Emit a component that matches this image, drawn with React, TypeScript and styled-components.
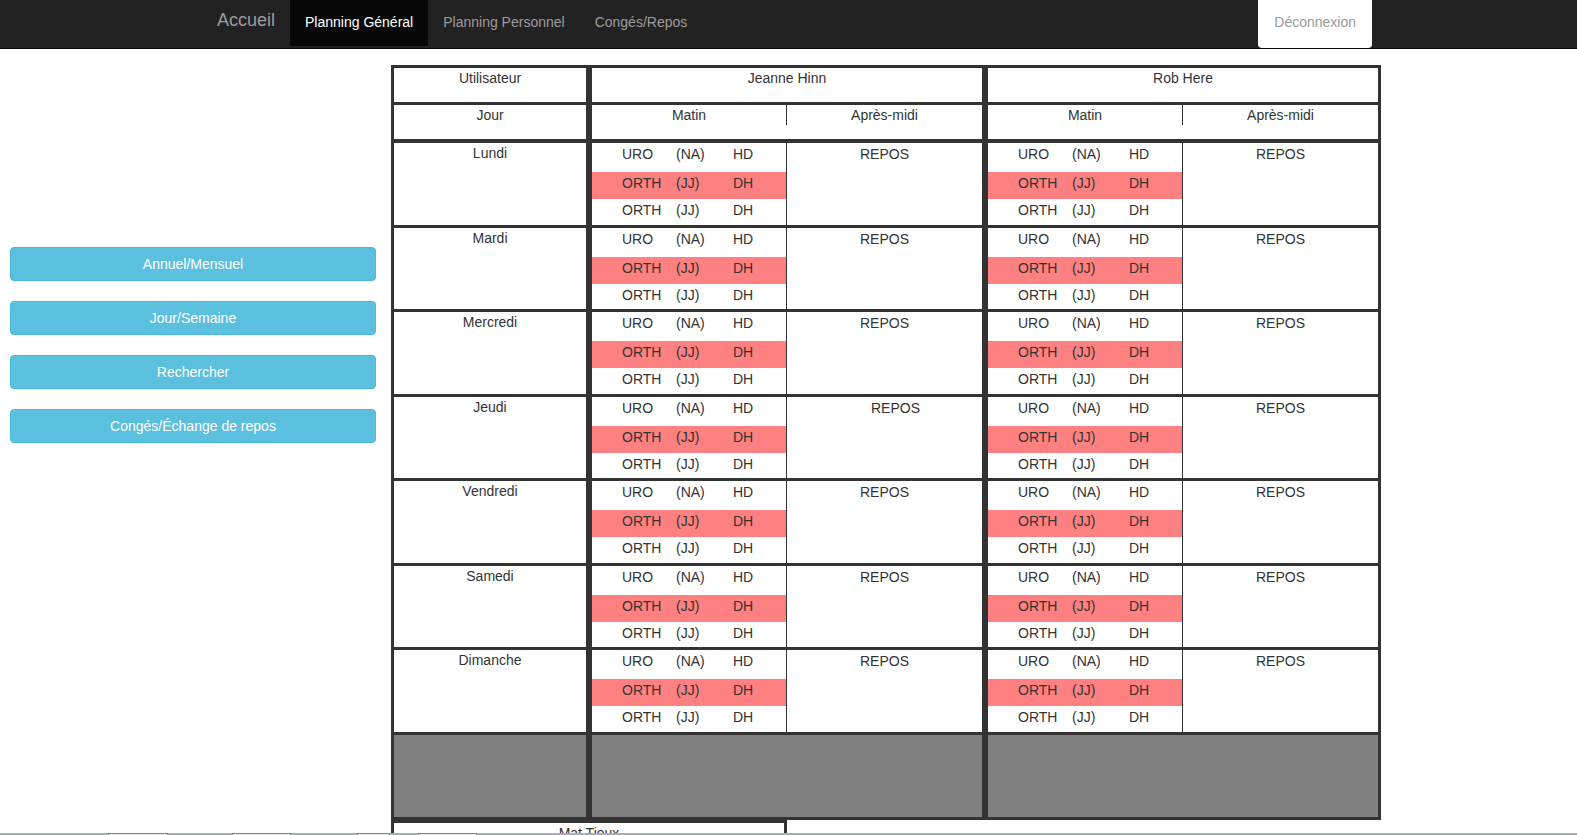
import React from 'react';
import styled, { createGlobalStyle, css } from 'styled-components';

const GlobalStyle = createGlobalStyle`
  *, *::before, *::after {
    box-sizing: border-box;
  }

  html, body {
    margin: 0;
    overflow: hidden;
    background: #fff;
    font-family: "Liberation Sans", Arial, Helvetica, sans-serif;
    font-size: 14px;
    line-height: 20px;
    color: #333;
  }
`;

// navbar

const Navbar = styled.header`
  height: 49px;
  background-color: #222;
  border-bottom: 1px solid #080808;
`;

const NavInner = styled.div`
  max-width: 1173px;
  height: 100%;
  margin: 0 auto;
  display: flex;
  align-items: flex-start;
`;

const Brand = styled.a`
  padding: 10px 15px 0;
  font-size: 18px;
  line-height: 20px;
  color: #9d9d9d;
  text-decoration: none;
`;

const NavList = styled.ul`
  display: flex;
  margin: 0;
  padding: 0;
  list-style: none;
`;

const NavLink = styled.a<{ $active?: boolean }>`
  display: block;
  padding: 12px 15px 14px;
  line-height: 20px;
  color: #9d9d9d;
  text-decoration: none;

  ${(p) =>
    p.$active &&
    css`
      background-color: #080808;
      color: #fff;
    `}
`;

const LogoutButton = styled.div`
  margin-left: auto;
  margin-right: 3px;
  height: 48px;
  padding: 12px 16px 0;
  border-radius: 0 0 4px 4px;
  background: #fff;
  color: #999;
  line-height: 20px;
`;

// page

const Page = styled.div`
  display: flex;
  align-items: flex-start;
`;

const Sidebar = styled.aside`
  flex: none;
  width: 391px;
  padding: 198px 15px 0 10px;
  display: flex;
  flex-direction: column;
  gap: 20px;
`;

const SideButton = styled.button`
  height: 34px;
  padding: 6px 12px;
  border: 1px solid #46b8da;
  border-radius: 4px;
  background-color: #5bc0de;
  color: #fff;
  font-family: inherit;
  font-size: 14px;
  line-height: 20px;
  text-align: center;
`;

const Planning = styled.main`
  flex: 1;
  margin-top: 16px;
  display: flex;
  flex-wrap: wrap;
  align-items: flex-start;
`;

const Block = styled.section<{ $wide?: boolean }>`
  width: ${(p) => (p.$wide ? 396 : 198)}px;
  border: 3px solid #333;
  display: flex;
  flex-direction: column;
`;

const NameCell = styled.div`
  height: 37px;
  border-bottom: 3px solid #333;
  text-align: center;
`;

const SubCell = styled.div`
  height: 38px;
  border-bottom: 4px solid #333;
  display: flex;
  text-align: center;
`;

const HalfHeader = styled.div<{ $first?: boolean }>`
  height: 20px;
  flex: 1;
  ${(p) =>
    p.$first &&
    css`
      flex: none;
      width: 195px;
      border-right: 1px solid #333;
    `}
`;

const DayRow = styled.div`
  height: 84.5px;
  border-bottom: 3px solid #333;
  display: flex;
`;

const DayName = styled.div`
  flex: 1;
  text-align: center;
`;

const MorningCell = styled.div`
  width: 195px;
  border-right: 1px solid #333;
  display: grid;
  grid-template-rows: 29px 27px 1fr;
`;

const Line = styled.div<{ $highlight?: boolean }>`
  display: grid;
  grid-template-columns: 54px 57px auto;
  padding: 1px 0 0 30px;
  background-color: ${(p) => (p.$highlight ? '#ff8080' : 'transparent')};
`;

const AfternoonCell = styled.div<{ $shift?: number }>`
  flex: 1;
  padding-top: 1px;
  text-align: center;
  padding-left: ${(p) => p.$shift ?? 0}px;
`;

const EmptyCell = styled.div`
  height: 82px;
  background-color: #808080;
`;

// bottom strip drawn over the page

const BottomStrip = styled.div`
  position: fixed;
  left: 0;
  right: 0;
  bottom: 0;
  height: 2px;
  background-color: #a9adb2;
`;

const StripTab = styled.span<{ $left: number; $width: number }>`
  position: absolute;
  top: 0;
  left: ${(p) => p.$left}px;
  width: ${(p) => p.$width}px;
  height: 2px;
  background-color: #ededed;
  border-top: 1px solid #7f8184;
  border-left: 1px solid #7f8184;
  border-right: 1px solid #7f8184;
`;

const days = ['Lundi', 'Mardi', 'Mercredi', 'Jeudi', 'Vendredi', 'Samedi', 'Dimanche'];

const morning = [
  ['URO', '(NA)', 'HD'],
  ['ORTH', '(JJ)', 'DH'],
  ['ORTH', '(JJ)', 'DH'],
];

const users = [
  { name: 'Jeanne Hinn', shifted: 'Jeudi' },
  { name: 'Rob Here' },
  { name: 'Mat Tieux' },
];

const tabs = [
  { left: 108, width: 60 },
  { left: 232, width: 59 },
  { left: 357, width: 33 },
  { left: 418, width: 59 },
];

const UserBlock: React.FC<{ name: string; shifted?: string }> = ({ name, shifted }) => (
  <Block $wide>
    <NameCell>{name}</NameCell>
    <SubCell>
      <HalfHeader $first>Matin</HalfHeader>
      <HalfHeader>Après-midi</HalfHeader>
    </SubCell>
    {days.map((day) => (
      <DayRow key={day}>
        <MorningCell>
          {morning.map((line, i) => (
            <Line key={i} $highlight={i === 1}>
              {line.map((part) => (
                <span key={part}>{part}</span>
              ))}
            </Line>
          ))}
        </MorningCell>
        <AfternoonCell $shift={day === shifted ? 22 : 0}>REPOS</AfternoonCell>
      </DayRow>
    ))}
    <EmptyCell />
  </Block>
);

export default function App() {
  return (
    <>
      <GlobalStyle />
      <Navbar>
        <NavInner>
          <Brand>Accueil</Brand>
          <NavList>
            <li>
              <NavLink $active>Planning Général</NavLink>
            </li>
            <li>
              <NavLink>Planning Personnel</NavLink>
            </li>
            <li>
              <NavLink>Congés/Repos</NavLink>
            </li>
          </NavList>
          <LogoutButton>Déconnexion</LogoutButton>
        </NavInner>
      </Navbar>

      <Page>
        <Sidebar>
          <SideButton>Annuel/Mensuel</SideButton>
          <SideButton>Jour/Semaine</SideButton>
          <SideButton>Rechercher</SideButton>
          <SideButton>Congés/Échange de repos</SideButton>
        </Sidebar>

        <Planning>
          <Block>
            <NameCell>Utilisateur</NameCell>
            <SubCell>
              <DayName>Jour</DayName>
            </SubCell>
            {days.map((day) => (
              <DayRow key={day}>
                <DayName>{day}</DayName>
              </DayRow>
            ))}
            <EmptyCell />
          </Block>
          {users.map((u) => (
            <UserBlock key={u.name} name={u.name} shifted={u.shifted} />
          ))}
        </Planning>
      </Page>

      <BottomStrip>
        {tabs.map((t) => (
          <StripTab key={t.left} $left={t.left} $width={t.width} />
        ))}
      </BottomStrip>
    </>
  );
}
